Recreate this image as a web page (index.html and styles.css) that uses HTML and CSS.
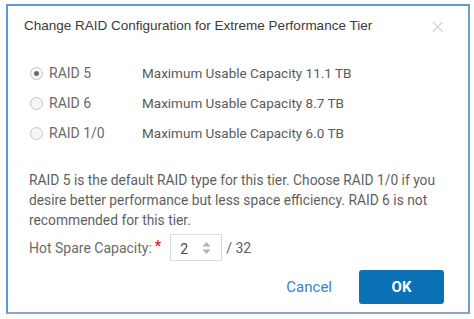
FILE: index.html
```html
<!DOCTYPE html>
<html lang="en">
<head>
    <meta charset="UTF-8">
    <title>Change RAID Configuration</title>
    <link rel="stylesheet" href="styles.css">
</head>
<body>
    <div class="page">
        <div class="dialog">
            <div class="dialog-header">
                <div class="dialog-title">Change RAID Configuration for Extreme Performance Tier</div>
                <span class="close-btn">&times;</span>
            </div>

            <!-- RAID type choices -->
            <div class="raid-list">
                <label class="raid-row">
                    <span class="radio checked"></span>
                    <span class="raid-name">RAID 5</span>
                    <span class="raid-cap">Maximum Usable Capacity 11.1 TB</span>
                </label>
                <label class="raid-row">
                    <span class="radio"></span>
                    <span class="raid-name">RAID 6</span>
                    <span class="raid-cap">Maximum Usable Capacity 8.7 TB</span>
                </label>
                <label class="raid-row">
                    <span class="radio"></span>
                    <span class="raid-name">RAID 1/0</span>
                    <span class="raid-cap">Maximum Usable Capacity 6.0 TB</span>
                </label>
            </div>

            <p class="note">RAID 5 is the default RAID type for this tier. Choose RAID 1/0 if you desire better performance but less space efficiency. RAID 6 is not recommended for this tier.</p>

            <div class="spare-row">
                <span class="spare-label">Hot Spare Capacity:</span>
                <span class="required">*</span>
                <div class="spinner">
                    <span class="spinner-value">2</span>
                    <svg class="spinner-arrows" width="9" height="14" viewBox="0 0 9 14">
                        <path d="M0.5 5.5 L4.5 1 L8.5 5.5 Z" fill="#b0b0b0"/>
                        <path d="M0.5 8.5 L4.5 13 L8.5 8.5 Z" fill="#b0b0b0"/>
                    </svg>
                </div>
                <span class="spare-total">/ 32</span>
            </div>

            <div class="dialog-footer">
                <button type="button" class="btn-cancel">Cancel</button>
                <button type="button" class="btn-ok">OK</button>
            </div>
        </div>
    </div>
</body>
</html>
```

FILE: styles.css
```css
body, html {
    margin: 0;
    padding: 0;
    background-color: white;
}
.page {
    padding: 4px 4px 5px 6px;
}
.dialog {
    box-sizing: border-box;
    width: 464px;
    height: 310px;
    border: 2px solid #5d9bd3;
    border-bottom-color: #8aa6c2;
    border-right-color: #6f9dc9;
    background-color: white;
    font-family: Roboto, "Liberation Sans", sans-serif;
    color: #5f5f5f;
    display: flex;
    flex-direction: column;
}
.dialog-header {
    display: flex;
    align-items: center;
    justify-content: space-between;
    padding: 9px 16px 0 16px;
    height: 20px;
}
.dialog-title {
    font-family: "Liberation Sans", Arial, sans-serif;
    font-size: 13.5px;
    color: #3a3a3a;
}
.close-btn {
    font-family: "DejaVu Sans", sans-serif;
    font-size: 20px;
    font-weight: 300;
    color: #cfcfcf;
    margin-right: 6px;
    margin-top: 2px;
}

/* RAID choices */
.raid-list {
    margin-top: 23px;
    padding-left: 22px;
    display: flex;
    flex-direction: column;
}
.raid-row {
    display: flex;
    align-items: center;
    height: 30px;
    font-size: 13.5px;
}
.radio {
    box-sizing: border-box;
    width: 13px;
    height: 13px;
    border: 1px solid #c4c4c4;
    border-radius: 50%;
    background-color: #f6f6f6;
    display: flex;
    align-items: center;
    justify-content: center;
}
.radio.checked::after {
    content: "";
    width: 5px;
    height: 5px;
    border-radius: 50%;
    background-color: #6a6a6a;
}
.raid-name {
    margin-left: 6px;
    width: 93px;
    font-size: 14px;
    color: #6a6a6a;
}
.raid-cap {
    color: #5a5a5a;
}

.note {
    margin: 22px 24px 0 21px;
    font-size: 13.8px;
    line-height: 20px;
    color: #5f5f5f;
}

.spare-row {
    display: flex;
    align-items: center;
    margin: 4px 0 0 21px;
    font-size: 14px;
}
.spare-label {
    color: #6a6a6a;
}
.required {
    color: #e02020;
    margin-left: 3px;
    font-weight: bold;
    align-self: flex-start;
    margin-top: 4px;
}
.spinner {
    box-sizing: border-box;
    width: 52px;
    height: 27px;
    margin-left: 9px;
    border: 1px solid #dcdcdc;
    display: flex;
    align-items: center;
    justify-content: space-between;
    padding: 0 10px 0 9px;
}
.spinner-value {
    font-size: 14px;
    color: #444;
    margin-top: 3px;
}
.spare-total {
    margin-left: 4px;
    font-size: 14px;
    color: #5f5f5f;
}

.dialog-footer {
    display: flex;
    justify-content: flex-end;
    align-items: center;
    margin-top: auto;
    padding: 0 24px 8px 0;
}
.btn-cancel {
    background: none;
    border: none;
    font-family: Roboto, "Liberation Sans", sans-serif;
    font-size: 15px;
    color: #3d82c0;
    padding: 0;
    margin-right: 27px;
    cursor: pointer;
}
.btn-ok {
    width: 85px;
    height: 34px;
    background-color: #0a71b5;
    color: white;
    border: none;
    border-radius: 3px;
    font-family: Roboto, "Liberation Sans", sans-serif;
    font-size: 15px;
    font-weight: bold;
    cursor: pointer;
}
```
